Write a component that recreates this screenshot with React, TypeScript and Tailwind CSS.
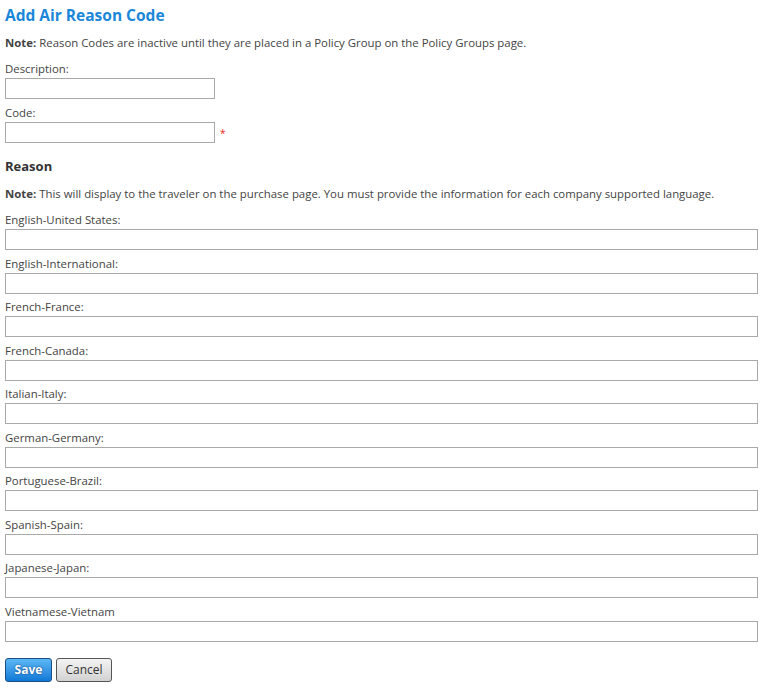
const languages = [
  'English-United States:',
  'English-International:',
  'French-France:',
  'French-Canada:',
  'Italian-Italy:',
  'German-Germany:',
  'Portuguese-Brazil:',
  'Spanish-Spain:',
  'Japanese-Japan:',
  'Vietnamese-Vietnam',
];

const App = () => {
  return (
    <div className="min-h-screen bg-white px-[5px] pt-[5px] text-[11.4px] text-[#444] font-['Open_Sans',sans-serif]">
      <h1 className="text-[15.5px] leading-[21px] font-bold text-[#1b87d9]">Add Air Reason Code</h1>

      <p className="mt-[8px] leading-[17px]">
        <span className="font-bold">Note:</span> Reason Codes are inactive until they are placed in a Policy Group on the Policy Groups page.
      </p>

      {/* Description / Code */}
      <div className="mt-[9px] leading-[17px]">Description:</div>
      <input type="text" className="mt-[1px] block w-[210px] h-[21px] border border-[#a9a9a9] outline-none" />

      <div className="mt-[5px] leading-[17px]">Code:</div>
      <div className="mt-[1px] flex items-center">
        <input type="text" className="block w-[210px] h-[21px] border border-[#a9a9a9] outline-none" />
        <span className="ml-[5px] text-[10px] text-[#e22] leading-none">*</span>
      </div>

      <h2 className="mt-[14px] text-[13px] leading-[18px] font-bold text-[#333]">Reason</h2>

      <p className="mt-[10px] leading-[17px]">
        <span className="font-bold">Note:</span> This will display to the traveler on the purchase page. You must provide the information for each company supported language.
      </p>

      <div className="mt-[9px] flex flex-col gap-[4.5px]">
        {languages.map((lang) => (
          <div key={lang}>
            <div className="leading-[17px]">{lang}</div>
            <input type="text" className="mt-[1px] block w-[753px] h-[21px] border border-[#a9a9a9] outline-none" />
          </div>
        ))}
      </div>

      <div className="mt-[16px] flex gap-[4px]">
        <button className="w-[47px] h-[24px] rounded-[3px] border border-[#1a4f86] bg-gradient-to-b from-[#5cb8f5] to-[#0c79d6] text-white font-bold text-[12px] [text-shadow:0_0_2px_#0a3c7a]">
          Save
        </button>
        <button className="w-[56px] h-[24px] rounded-[3px] border border-[#555] bg-gradient-to-b from-[#f4f4f4] to-[#d2d2d2] text-[#333] text-[12px]">
          Cancel
        </button>
      </div>
    </div>
  );
};

export default App;
